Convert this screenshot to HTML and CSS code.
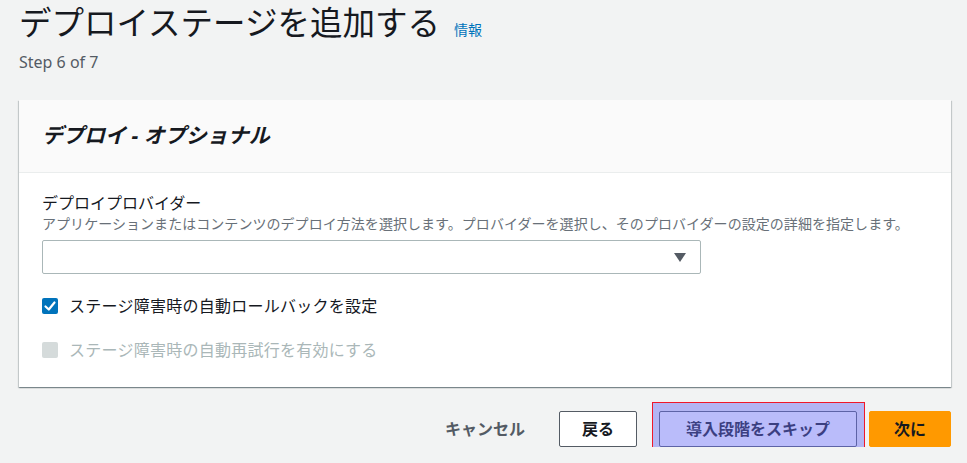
FILE: index.html
```html
<!DOCTYPE html>
<html lang="ja">
<head>
<meta charset="utf-8">
<title>デプロイステージを追加する</title>
<link rel="stylesheet" href="styles.css">
</head>
<body>
<div class="page">
  <div class="title-row">
    <h1 class="title">デプロイステージを追加する</h1>
    <a class="info" href="#">情報</a>
  </div>
  <div class="step">Step 6 of 7</div>

  <section class="panel">
    <header class="panel-header">
      <h2 class="panel-title">デプロイ - オプショナル</h2>
    </header>
    <div class="panel-body">
      <div class="field">
        <div class="field-label">デプロイプロバイダー</div>
        <div class="field-desc">アプリケーションまたはコンテンツのデプロイ方法を選択します。プロバイダーを選択し、そのプロバイダーの設定の詳細を指定します。</div>
        <div class="select">
          <svg class="select-arrow" width="12" height="9" viewBox="0 0 12 9"><polygon points="0,0 12,0 6,9" fill="#545b64"/></svg>
        </div>
      </div>
      <label class="check">
        <span class="box box-on">
          <svg width="16" height="16" viewBox="0 0 16 16"><polyline points="3.5,8.5 6.8,11.5 12.5,4.5" fill="none" stroke="#fff" stroke-width="2.2" stroke-linecap="round" stroke-linejoin="round"/></svg>
        </span>
        <span class="check-text">ステージ障害時の自動ロールバックを設定</span>
      </label>
      <label class="check check-disabled">
        <span class="box box-off"></span>
        <span class="check-text">ステージ障害時の自動再試行を有効にする</span>
      </label>
    </div>
  </section>

  <div class="actions">
    <button class="btn btn-link">キャンセル</button>
    <button class="btn btn-normal btn-back">戻る</button>
    <span class="skip-wrap">
      <button class="btn btn-normal btn-skip">導入段階をスキップ</button>
      <span class="highlight"></span>
    </span>
    <button class="btn btn-primary">次に</button>
  </div>
</div>
</body>
</html>
```

FILE: styles.css
```css
* { box-sizing: border-box; }

html, body {
  margin: 0;
  padding: 0;
  background: #f2f3f3;
}

body {
  font-family: "Noto Sans", "Noto Sans CJK JP", sans-serif;
  color: #16191f;
}

.page {
  padding: 3px 16px 0 19px;
}

.title-row {
  display: flex;
  align-items: baseline;
  gap: 14px;
}

.title {
  margin: 0;
  font-size: 32.5px;
  line-height: 40px;
  font-weight: 400;
  color: #16191f;
}

.info {
  font-size: 14px;
  color: #0073bb;
  text-decoration: none;
}

.step {
  margin-top: 8px;
  font-size: 16px;
  line-height: 22px;
  color: #545b64;
}

.panel {
  margin-top: 27px;
  background: #fff;
  box-shadow: 0 1px 1px 0 rgba(0, 28, 36, 0.3), 1px 1px 1px 0 rgba(0, 28, 36, 0.15), -1px 1px 1px 0 rgba(0, 28, 36, 0.15);
}

.panel-header {
  background: #fafafa;
  border-bottom: 1px solid #eaeded;
  padding: 21px 23px 23px;
}

.panel-title {
  margin: 0;
  font-size: 21px;
  line-height: 28px;
  font-weight: 700;
  font-style: italic;
  color: #16191f;
}

.panel-body {
  padding: 19px 23px 26px;
}

.field-label {
  font-size: 16px;
  line-height: 22px;
  color: #16191f;
}

.field-desc {
  font-size: 14px;
  line-height: 20px;
  letter-spacing: 0.05px;
  color: #687078;
}

.select {
  margin-top: 6px;
  width: 659px;
  height: 34px;
  border: 1px solid #aab7b8;
  border-radius: 2px;
  background: #fff;
  display: flex;
  align-items: center;
  justify-content: flex-end;
  padding-right: 14px;
}

.select-arrow { display: block; }

.check {
  display: flex;
  align-items: center;
  gap: 11px;
  font-size: 16px;
  line-height: 22px;
  letter-spacing: 0.25px;
  color: #16191f;
}

.check:first-of-type { margin-top: 21px; }

.check-disabled {
  margin-top: 22px;
  color: #aab7b8;
}

.box {
  width: 16px;
  height: 16px;
  border-radius: 2px;
  display: block;
  flex: none;
}

.box svg { display: block; }

.box-on { background: #0073bb; }

.box-off { background: #d5dbdb; }

.actions {
  margin-top: 24px;
  display: flex;
  justify-content: flex-end;
  align-items: center;
}

.btn {
  font-family: inherit;
  font-size: 16px;
  font-weight: 700;
  height: 36px;
  line-height: 22px;
  padding: 0 24px;
  border-radius: 2px;
  border: 1px solid transparent;
  cursor: pointer;
}

.btn-link {
  background: transparent;
  color: #545b64;
  padding: 0 18px;
  margin-right: 15px;
}

.btn-normal {
  background: #fff;
  color: #16191f;
  border-color: #545b64;
}

.btn-back {
  padding: 0 22px;
  margin-right: 22px;
}

.skip-wrap {
  position: relative;
  display: block;
  margin-right: 12px;
}

.btn-skip {
  display: block;
  padding: 0 26px;
}

.highlight {
  position: absolute;
  top: -9px;
  left: -7px;
  right: -8px;
  bottom: -4px;
  background: rgba(105, 109, 244, 0.46);
  border: 1px solid #f0182a;
  pointer-events: none;
}

.btn-primary {
  background: #ff9900;
  border-color: #ff9900;
  color: #16191f;
}
```
